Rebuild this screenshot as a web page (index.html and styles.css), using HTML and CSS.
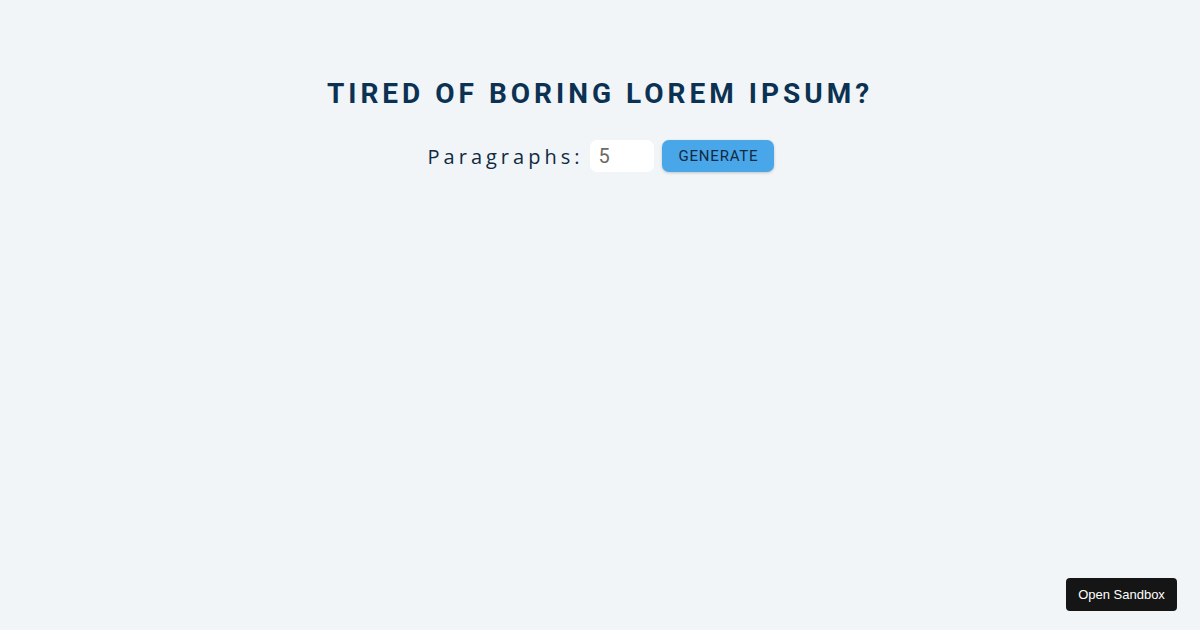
FILE: index.html
```html
<!DOCTYPE html>
<html lang="en">
<head>
<meta charset="utf-8">
<title>Lorem Ipsum Generator</title>
<link rel="stylesheet" href="styles.css">
</head>
<body>
  <main class="app">
    <h1 class="title">Tired of boring lorem ipsum?</h1>
    <form class="controls">
      <label class="label" for="amount">Paragraphs:</label>
      <input class="amount" id="amount" type="number" value="5">
      <button class="generate" type="button">Generate</button>
    </form>
  </main>
  <a class="sandbox" href="#">Open Sandbox</a>
</body>
</html>
```

FILE: styles.css
```css
* { box-sizing: border-box; }

html, body {
  margin: 0;
  height: 100%;
}

body {
  background: #f1f5f8;
  font-family: "Open Sans", sans-serif;
  color: #102a42;
}

.app {
  display: flex;
  flex-direction: column;
  align-items: center;
  padding-top: 76px;
}

.title {
  margin: 0;
  font-family: Roboto, sans-serif;
  font-weight: 700;
  font-size: 28px;
  line-height: 36px;
  letter-spacing: 4px;
  text-transform: uppercase;
  color: #0c3253;
}

.controls {
  display: flex;
  align-items: center;
  margin-top: 28px;
  padding-left: 2px;
}

.label {
  font-size: 20px;
  letter-spacing: 4px;
  color: #102a42;
  margin-right: 7px;
}

.amount {
  width: 64px;
  height: 32px;
  border: none;
  border-radius: 7px;
  background: #fff;
  padding: 0 8px;
  font-family: Roboto, sans-serif;
  font-size: 20px;
  color: #6e6a66;
  outline: none;
  -moz-appearance: textfield;
}

.amount::-webkit-inner-spin-button,
.amount::-webkit-outer-spin-button {
  -webkit-appearance: none;
  margin: 0;
}

.generate {
  margin-left: 8px;
  width: 112px;
  height: 32px;
  border: none;
  border-radius: 7px;
  background: #49a6e9;
  color: #102a42;
  font-family: Roboto, sans-serif;
  font-weight: 400;
  font-size: 15px;
  letter-spacing: 0.8px;
  text-transform: uppercase;
  box-shadow: 0 1px 3px rgba(0, 0, 0, 0.2);
  cursor: pointer;
}

.sandbox {
  position: fixed;
  right: 23px;
  bottom: 19px;
  width: 111px;
  height: 33px;
  display: flex;
  align-items: center;
  justify-content: center;
  background: #151515;
  border-radius: 4px;
  color: #fff;
  font-family: "Liberation Sans", Arial, sans-serif;
  font-size: 13px;
  text-decoration: none;
}
```
